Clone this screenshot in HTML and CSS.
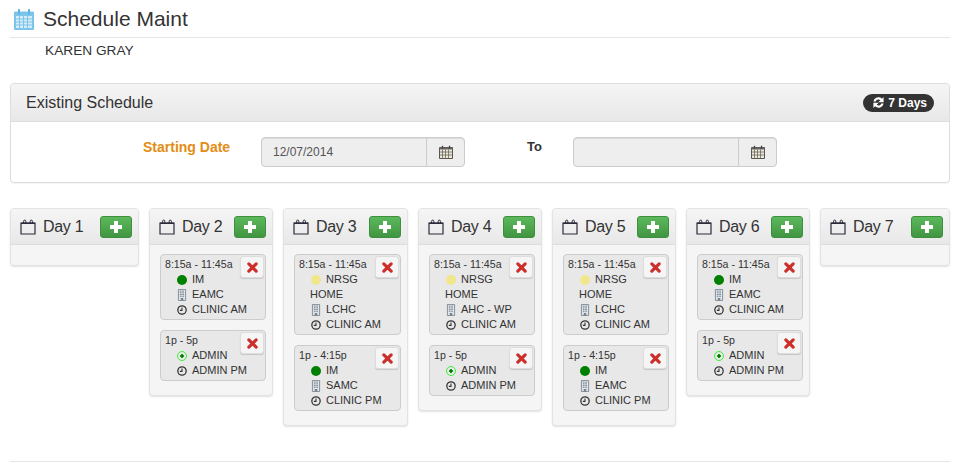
FILE: index.html
```html
<!DOCTYPE html>
<html lang="en">

<head>
  <meta charset="UTF-8">
  <title>Schedule Maint</title>
  <link rel="stylesheet" href="styles.css">
</head>

<body>
  <svg class="defs" width="0" height="0">
    <symbol id="cal-line" viewBox="0 0 16 16">
      <path d="M1 4h14v11H1z" fill="none" stroke="currentColor" stroke-width="1.2" />
      <path d="M1 3.600h14v1.400H1z" fill="currentColor" />
      <path d="M3.600 4V2.200a1.100 1.100 0 0 1 2.200 0V4M10.200 4V2.200a1.100 1.100 0 0 1 2.200 0V4" fill="none" stroke="currentColor" stroke-width="1" />
    </symbol>
    <symbol id="cal-grid" viewBox="0 0 14 14">
      <path d="M.5 2.500h13v11H.5z" fill="#efe8d2" stroke="#555" />
      <path d="M.5 2.500h13v2H.5z" fill="#666" />
      <path d="M3.500 4.500v9M6.500 4.500v9M9.500 4.500v9M.5 7h13M.5 10h13" stroke="#666" stroke-width=".8" />
      <path d="M3.500 .8v3M10.500 .8v3" stroke="#444" stroke-width="1.300" />
    </symbol>
    <symbol id="building" viewBox="0 0 10 14">
      <path d="M.8 .5h8.400v13H.8z" fill="#dfe5ea" stroke="#76828c" />
      <path d="M2.500 2.500h5M2.500 4.500h5M2.500 6.500h5M2.500 8.500h5" stroke="#76828c" stroke-width="1.100" stroke-dasharray="2 .8" />
      <path d="M3.500 10.500h3v3h-3z" fill="#76828c" />
    </symbol>
    <symbol id="clock" viewBox="0.5 0.5 11 11">
      <circle cx="6" cy="6" r="4.600" fill="none" stroke="#333" stroke-width="1.400" />
      <path d="M6 3.200V6.400H3.600" fill="none" stroke="#333" stroke-width="1.200" />
    </symbol>
    <symbol id="cross" viewBox="0 0 12 12">
      <path d="M2 2l8 8M10 2l-8 8" stroke="#cc2f2a" stroke-width="3.400" stroke-linecap="round" />
    </symbol>
  </svg>

  <div class="page-title">
    <svg class="title-icon" viewBox="0 0 20 21">
      <path d="M0 3.500Q0 2.500 1 2.500H19Q20 2.500 20 3.500V20Q20 21 19 21H1Q0 21 0 20Z" fill="#7cc5ea" />
      <path d="M2 7h16v12H2z" fill="#d6edf9" />
      <path d="M5.500 7v12M9.500 7v12M13.500 7v12M2 10h16M2 13h16M2 16h16" stroke="#7cc5ea" stroke-width="1" />
      <path d="M5 .8v4M15 .8v4" stroke="#62b3dd" stroke-width="2" stroke-linecap="round" />
    </svg>
    <h1>Schedule Maint</h1>
  </div>
  <div class="person">KAREN GRAY</div>

  <div class="panel">
    <div class="panel-heading">
      <span class="panel-title">Existing Schedule</span>
      <span class="badge">
        <svg viewBox="0 0 14 14">
          <path d="M1.500 6a5.500 5.500 0 0 1 9.200-3.100L12.500 1V6.700H6.800L9 4.600A3 3 0 0 0 4 6Z" fill="#fff" />
          <path d="M12.500 8a5.500 5.500 0 0 1-9.200 3.100L1.500 13V7.300H7.200L5 9.400A3 3 0 0 0 10 8Z" fill="#fff" />
        </svg>
        7 Days
      </span>
    </div>
    <div class="panel-body">
      <label class="date-label">Starting Date</label>
      <div class="date-group">
        <div class="date-input">12/07/2014</div>
        <div class="date-addon"><svg><use href="#cal-grid" /></svg></div>
      </div>
      <label class="to-label">To</label>
      <div class="date-group">
        <div class="date-input"></div>
        <div class="date-addon"><svg><use href="#cal-grid" /></svg></div>
      </div>
    </div>
  </div>

  <div class="days">
    <div class="day">
      <div class="day-heading">
        <svg class="day-icon"><use href="#cal-line" /></svg>
        <span class="day-name">Day 1</span>
        <button class="add-btn"><span class="plus"></span></button>
      </div>
      <div class="day-body empty"></div>
    </div>

    <div class="day">
      <div class="day-heading">
        <svg class="day-icon"><use href="#cal-line" /></svg>
        <span class="day-name">Day 2</span>
        <button class="add-btn"><span class="plus"></span></button>
      </div>
      <div class="day-body">
        <div class="shift">
          <button class="del-btn"><svg><use href="#cross" /></svg></button>
          <div class="time">8:15a - 11:45a</div>
          <div class="row"><span class="dot green"></span>IM</div>
          <div class="row"><svg class="ico"><use href="#building" /></svg>EAMC</div>
          <div class="row"><svg class="ico"><use href="#clock" /></svg>CLINIC AM</div>
        </div>
        <div class="shift">
          <button class="del-btn"><svg><use href="#cross" /></svg></button>
          <div class="time">1p - 5p</div>
          <div class="row"><span class="dot ring"></span>ADMIN</div>
          <div class="row"><svg class="ico"><use href="#clock" /></svg>ADMIN PM</div>
        </div>
      </div>
    </div>

    <div class="day">
      <div class="day-heading">
        <svg class="day-icon"><use href="#cal-line" /></svg>
        <span class="day-name">Day 3</span>
        <button class="add-btn"><span class="plus"></span></button>
      </div>
      <div class="day-body">
        <div class="shift">
          <button class="del-btn"><svg><use href="#cross" /></svg></button>
          <div class="time">8:15a - 11:45a</div>
          <div class="row"><span class="dot yellow"></span>NRSG</div>
          <div class="row home">HOME</div>
          <div class="row"><svg class="ico"><use href="#building" /></svg>LCHC</div>
          <div class="row"><svg class="ico"><use href="#clock" /></svg>CLINIC AM</div>
        </div>
        <div class="shift">
          <button class="del-btn"><svg><use href="#cross" /></svg></button>
          <div class="time">1p - 4:15p</div>
          <div class="row"><span class="dot green"></span>IM</div>
          <div class="row"><svg class="ico"><use href="#building" /></svg>SAMC</div>
          <div class="row"><svg class="ico"><use href="#clock" /></svg>CLINIC PM</div>
        </div>
      </div>
    </div>

    <div class="day">
      <div class="day-heading">
        <svg class="day-icon"><use href="#cal-line" /></svg>
        <span class="day-name">Day 4</span>
        <button class="add-btn"><span class="plus"></span></button>
      </div>
      <div class="day-body">
        <div class="shift">
          <button class="del-btn"><svg><use href="#cross" /></svg></button>
          <div class="time">8:15a - 11:45a</div>
          <div class="row"><span class="dot yellow"></span>NRSG</div>
          <div class="row home">HOME</div>
          <div class="row"><svg class="ico"><use href="#building" /></svg>AHC - WP</div>
          <div class="row"><svg class="ico"><use href="#clock" /></svg>CLINIC AM</div>
        </div>
        <div class="shift">
          <button class="del-btn"><svg><use href="#cross" /></svg></button>
          <div class="time">1p - 5p</div>
          <div class="row"><span class="dot ring"></span>ADMIN</div>
          <div class="row"><svg class="ico"><use href="#clock" /></svg>ADMIN PM</div>
        </div>
      </div>
    </div>

    <div class="day">
      <div class="day-heading">
        <svg class="day-icon"><use href="#cal-line" /></svg>
        <span class="day-name">Day 5</span>
        <button class="add-btn"><span class="plus"></span></button>
      </div>
      <div class="day-body">
        <div class="shift">
          <button class="del-btn"><svg><use href="#cross" /></svg></button>
          <div class="time">8:15a - 11:45a</div>
          <div class="row"><span class="dot yellow"></span>NRSG</div>
          <div class="row home">HOME</div>
          <div class="row"><svg class="ico"><use href="#building" /></svg>LCHC</div>
          <div class="row"><svg class="ico"><use href="#clock" /></svg>CLINIC AM</div>
        </div>
        <div class="shift">
          <button class="del-btn"><svg><use href="#cross" /></svg></button>
          <div class="time">1p - 4:15p</div>
          <div class="row"><span class="dot green"></span>IM</div>
          <div class="row"><svg class="ico"><use href="#building" /></svg>EAMC</div>
          <div class="row"><svg class="ico"><use href="#clock" /></svg>CLINIC PM</div>
        </div>
      </div>
    </div>

    <div class="day">
      <div class="day-heading">
        <svg class="day-icon"><use href="#cal-line" /></svg>
        <span class="day-name">Day 6</span>
        <button class="add-btn"><span class="plus"></span></button>
      </div>
      <div class="day-body">
        <div class="shift">
          <button class="del-btn"><svg><use href="#cross" /></svg></button>
          <div class="time">8:15a - 11:45a</div>
          <div class="row"><span class="dot green"></span>IM</div>
          <div class="row"><svg class="ico"><use href="#building" /></svg>EAMC</div>
          <div class="row"><svg class="ico"><use href="#clock" /></svg>CLINIC AM</div>
        </div>
        <div class="shift">
          <button class="del-btn"><svg><use href="#cross" /></svg></button>
          <div class="time">1p - 5p</div>
          <div class="row"><span class="dot ring"></span>ADMIN</div>
          <div class="row"><svg class="ico"><use href="#clock" /></svg>ADMIN PM</div>
        </div>
      </div>
    </div>

    <div class="day">
      <div class="day-heading">
        <svg class="day-icon"><use href="#cal-line" /></svg>
        <span class="day-name">Day 7</span>
        <button class="add-btn"><span class="plus"></span></button>
      </div>
      <div class="day-body empty"></div>
    </div>
  </div>

  <hr class="footer-line">
</body>

</html>
```

FILE: styles.css
```css
* {
  box-sizing: border-box;
}

body {
  margin: 0;
  padding: 0 12px 0 10px;
  font-family: "Liberation Sans", Arial, sans-serif;
  font-size: 14px;
  color: #333;
  background: #fff;
  overflow: hidden;
}

.defs {
  position: absolute;
}

.page-title {
  display: flex;
  align-items: center;
  height: 38px;
  padding: 1px 0 0 4px;
  border-bottom: 1px solid #e5e5e5;
}

.title-icon {
  width: 20px;
  height: 21px;
  margin-right: 9px;
}

h1 {
  margin: 0;
  font-size: 21px;
  font-weight: 400;
  line-height: 24px;
}

.person {
  padding-left: 35px;
  font-size: 13.7px;
  line-height: 25px;
}

.panel {
  margin-top: 20px;
  height: 100px;
  border: 1px solid #ddd;
  border-radius: 4px;
  box-shadow: 0 1px 1px rgba(0, 0, 0, 0.05);
}

.panel-heading {
  display: flex;
  justify-content: space-between;
  align-items: center;
  height: 38px;
  padding: 0 15px;
  border-bottom: 1px solid #ddd;
  border-radius: 3px 3px 0 0;
  background: linear-gradient(to bottom, #f5f5f5, #e8e8e8);
}

.panel-title {
  font-size: 16px;
}

.badge {
  display: flex;
  align-items: center;
  gap: 3px;
  height: 18px;
  padding: 0 7px 0 9px;
  border-radius: 10px;
  background: #333;
  color: #fff;
  font-size: 12px;
  font-weight: 700;
}

.badge svg {
  width: 13px;
  height: 13px;
}

.panel-body {
  display: flex;
  align-items: flex-start;
  padding-top: 15px;
}

.date-label {
  width: 88px;
  margin: 1px 30px 0 132px;
  color: #e38d13;
  font-size: 14px;
  font-weight: 700;
  line-height: 18px;
  white-space: nowrap;
}

.to-label {
  width: 46px;
  margin: 1px 0 0 62px;
  font-size: 13px;
  font-weight: 700;
  line-height: 18px;
}

.date-group {
  display: flex;
  width: 204px;
  height: 30px;
  border: 1px solid #ccc;
  border-radius: 4px;
  background: #eee;
  box-shadow: inset 0 1px 1px rgba(0, 0, 0, 0.075);
}

.date-input {
  flex: 1;
  padding-left: 11px;
  color: #555;
  font-size: 12px;
  line-height: 28px;
}

.date-addon {
  display: flex;
  justify-content: center;
  align-items: center;
  width: 38px;
  border-left: 1px solid #ccc;
}

.date-addon svg {
  width: 14px;
  height: 14px;
}

.days {
  display: grid;
  grid-template-columns: 129px 124px 125px 124px 124px 124px 130px;
  gap: 10px;
  align-items: start;
  margin-top: 25px;
}

.day {
  border: 1px solid #e3e3e3;
  border-radius: 4px;
  background: #f5f5f5;
  box-shadow: 0 1px 2px rgba(0, 0, 0, 0.12);
}

.day-heading {
  display: flex;
  align-items: center;
  height: 36px;
  padding: 0 6px 0 9px;
  border-bottom: 1px solid #ddd;
  border-radius: 3px 3px 0 0;
  background: linear-gradient(to bottom, #f5f5f5, #e8e8e8);
}

.day-icon {
  width: 16px;
  height: 16px;
  margin-right: 7px;
  color: #2b2b3a;
}

.day-name {
  flex: 1;
  font-size: 16px;
  letter-spacing: -0.3px;
}

.add-btn {
  display: flex;
  justify-content: center;
  align-items: center;
  width: 32px;
  height: 22px;
  padding: 0;
  border: 1px solid #3e8f3e;
  border-radius: 3px;
  background: linear-gradient(to bottom, #5cb85c, #419641);
}

.plus {
  width: 12px;
  height: 12px;
  background:
    linear-gradient(#fff, #fff) center / 12px 4px no-repeat,
    linear-gradient(#fff, #fff) center / 4px 12px no-repeat;
}

.day-body {
  padding: 9px 6px 14px 10px;
}

.day-body.empty {
  height: 20px;
  padding: 0;
}

.shift {
  position: relative;
  margin-bottom: 10px;
  padding: 2px 4px 2px 4px;
  border: 1px solid #ccc;
  border-radius: 4px;
  background: #e8e8e8;
  font-size: 11px;
  line-height: 15px;
}

.shift:last-child {
  margin-bottom: 0;
}

.time {
  font-size: 10.6px;
  white-space: nowrap;
}

.del-btn {
  display: flex;
  justify-content: center;
  align-items: center;
  position: absolute;
  top: 1px;
  right: 1px;
  width: 24px;
  height: 22px;
  padding: 0;
  border: 1px solid #ddd;
  border-radius: 3px;
  background: #f5f5f5;
  box-shadow: 0 1px 1px rgba(0, 0, 0, 0.15);
}

.del-btn svg {
  width: 11px;
  height: 11px;
}

.row {
  display: flex;
  align-items: center;
  height: 15px;
  padding-left: 12px;
  white-space: nowrap;
}

.row.home {
  padding-left: 11px;
}

.ico {
  flex: none;
  width: 10px;
  height: 12px;
  margin-right: 5px;
}

.dot {
  flex: none;
  width: 10px;
  height: 10px;
  margin-right: 5px;
  border-radius: 50%;
}

.dot.green {
  background: #008000;
}

.dot.yellow {
  background: #f0e68c;
}

.dot.ring {
  border: 1.5px solid #3cf03c;
  background: radial-gradient(circle, #008000 0 1.5px, #e8e8e8 2px);
}

.footer-line {
  margin: 35px 0 0;
  border: 0;
  border-top: 1px solid #e5e5e5;
}
```
